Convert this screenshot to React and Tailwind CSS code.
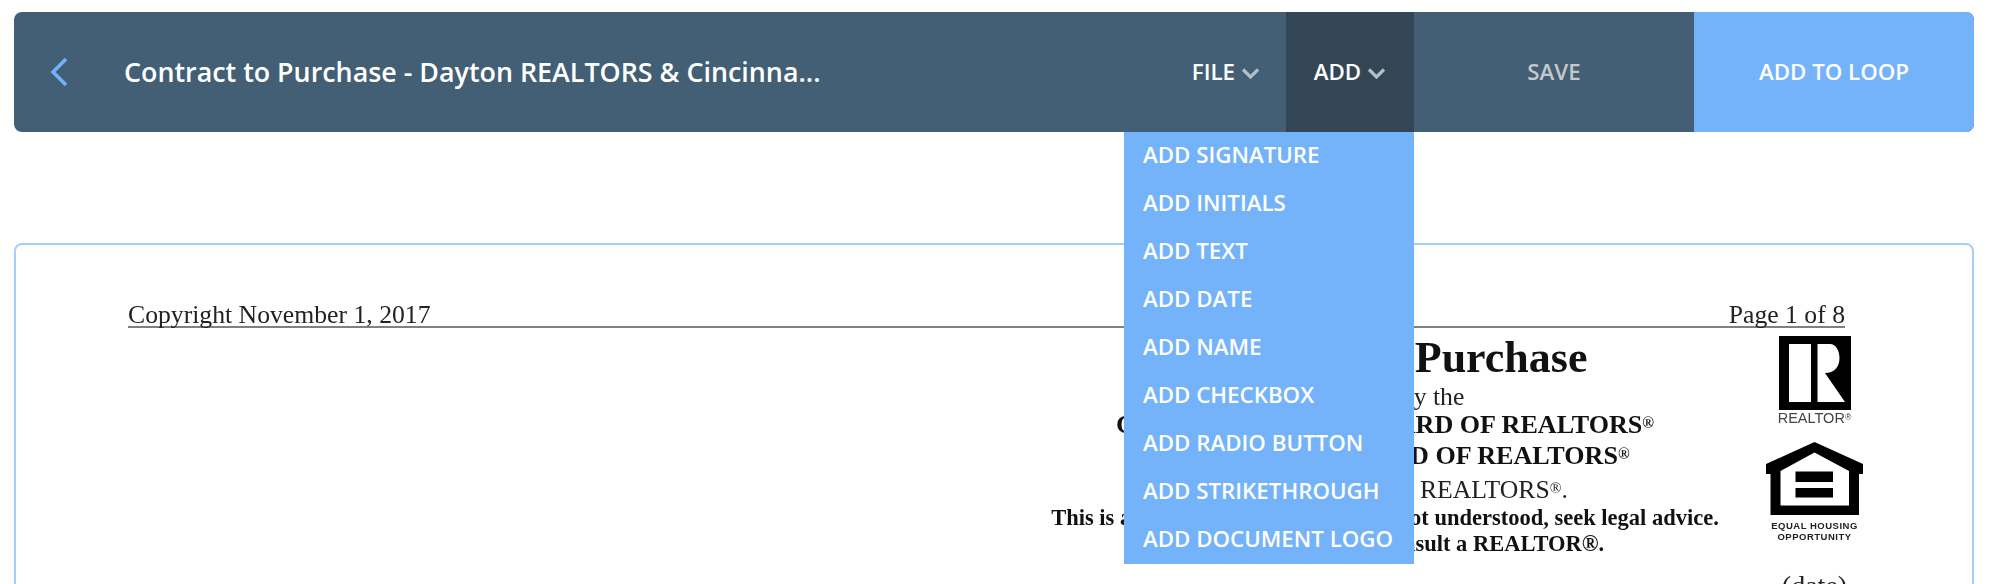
const addItems = [
  'ADD SIGNATURE',
  'ADD INITIALS',
  'ADD TEXT',
  'ADD DATE',
  'ADD NAME',
  'ADD CHECKBOX',
  'ADD RADIO BUTTON',
  'ADD STRIKETHROUGH',
  'ADD DOCUMENT LOGO',
];

function Caret() {
  return (
    <svg width="19" height="13" viewBox="0 0 19 13" fill="none" stroke="#b4bec6" strokeWidth="3.2" className="ml-[6px] mt-[3px]">
      <polyline points="2,2.5 9.5,10 17,2.5" />
    </svg>
  );
}

function RealtorLogo() {
  return (
    <svg width="72" height="74" viewBox="0 0 72 74">
      <rect width="72" height="74" fill="#000" />
      <rect x="10" y="8" width="22" height="58" fill="#fff" />
      <path d="M38.5 8H51C57 8 60.5 15 60.5 22C60.5 31 55 37 46 37L66 66H38.5Z" fill="#fff" />
    </svg>
  );
}

function HousingLogo() {
  return (
    <svg width="97" height="73" viewBox="0 0 97 73">
      <path d="M48.5 0 97 22V32H93V73H4.5V32H0V22Z" fill="#000" />
      <path d="M48.5 10.5 14.5 29V63.5H83V29Z" fill="#fff" />
      <rect x="29.5" y="29.5" width="37.5" height="10.5" fill="#000" />
      <rect x="29.5" y="46" width="37.5" height="9.5" fill="#000" />
    </svg>
  );
}

function Reg() {
  return <span className="align-[0.35em] text-[0.6em] leading-none">®</span>;
}

export default function App() {
  return (
    <div className="h-[584px] w-[1994px] overflow-hidden bg-white font-['Open_Sans',sans-serif]">
      <header className="relative z-10 ml-[14px] mr-[20px] mt-[12px] flex h-[120px] items-stretch rounded-lg bg-[#425f76] text-white">
        <button className="flex w-[110px] items-center pl-[35px]">
          <svg width="20" height="30" viewBox="0 0 20 30" fill="none" stroke="#74b3fa" strokeWidth="3.5">
            <polyline points="17,2 4,15 17,28" />
          </svg>
        </button>
        <h1 className="flex flex-1 items-center text-[26.85px] font-[650]">
          Contract to Purchase - Dayton REALTORS &amp; Cincinna...
        </h1>
        <button className="flex items-center px-[26px] text-[22.3px] font-[650]">
          FILE
          <Caret />
        </button>
        <div className="relative flex w-[128px]">
          <button className="flex w-full items-center justify-center bg-[#344655] text-[22.3px] font-[650]">
            ADD
            <Caret />
          </button>
          <ul className="absolute right-0 top-full w-[290px] bg-[#74b3fa]">
            {addItems.map((item) => (
              <li key={item} className="flex h-[48px] items-center whitespace-nowrap pb-[2px] pl-[19px] text-[22.3px] font-[650]">
                {item}
              </li>
            ))}
          </ul>
        </div>
        <button className="w-[280px] text-[22.3px] font-[650] text-[#c5c8ca]">SAVE</button>
        <button className="w-[280px] rounded-r-lg bg-[#74b3fa] text-[22.3px] font-[650]">ADD TO LOOP</button>
      </header>

      <main className="ml-[14px] mr-[20px] mt-[111px] h-[500px] rounded-lg border-2 border-[#a6d0fb] pl-[112px] pt-[55px]">
        <div className="w-[1717px] font-['Liberation_Serif',serif] text-[#111] blur-[0.7px]">
          <div className="flex h-[28px] items-end justify-between border-b-2 border-[#808080] text-[25.7px] leading-[22px] text-[#222]">
            <span>Copyright November 1, 2017</span>
            <span>Page 1 of 8</span>
          </div>
          <div className="flex pl-[892px]">
            <div className="flex w-[730px] shrink-0 flex-col items-center whitespace-nowrap">
              <div className="ml-[5px] mt-[10px] text-[44px] font-bold leading-[40px]">Contract to Purchase</div>
              <div className="mr-[14px] mt-[7px] text-[25.7px] leading-[24px] text-[#222]">Approved by the</div>
              <div className="mt-[4px] text-[26.1px] font-bold leading-[24px]">CINCINNATI AREA BOARD OF REALTORS<Reg /></div>
              <div className="mt-[7px] text-[26.1px] font-bold leading-[24px]">DAYTON AREA BOARD OF REALTORS<Reg /></div>
              <div className="ml-[58px] mt-[10px] text-[25.7px] leading-[24px] text-[#222]">Ohio Assoc. of REALTORS<Reg />.</div>
              <div className="mt-[4px] text-[22.5px] font-bold leading-[24px]">This is a legally binding contract. If not understood, seek legal advice.</div>
              <div className="mt-[2px] text-[22.5px] font-bold leading-[24px]">For real estate advice, consult a REALTOR®.</div>
            </div>
            <div className="ml-[16px] mt-[8px] flex w-[97px] shrink-0 flex-col items-center">
              <RealtorLogo />
              <div className="mt-[1px] whitespace-nowrap font-['Liberation_Sans',sans-serif] text-[14.5px] leading-[15px] text-[#444]">REALTOR<Reg /></div>
              <div className="mt-[16px]">
                <HousingLogo />
              </div>
              <div className="mt-[5px] text-center font-['Liberation_Sans',sans-serif] text-[9.5px] font-bold leading-[11px] tracking-[0.5px] text-[#222]">
                EQUAL HOUSING
                <br />
                OPPORTUNITY
              </div>
              <div className="mt-[31px] text-[28px] leading-[26px] text-[#222]">(date)</div>
            </div>
          </div>
        </div>
      </main>
    </div>
  );
}
